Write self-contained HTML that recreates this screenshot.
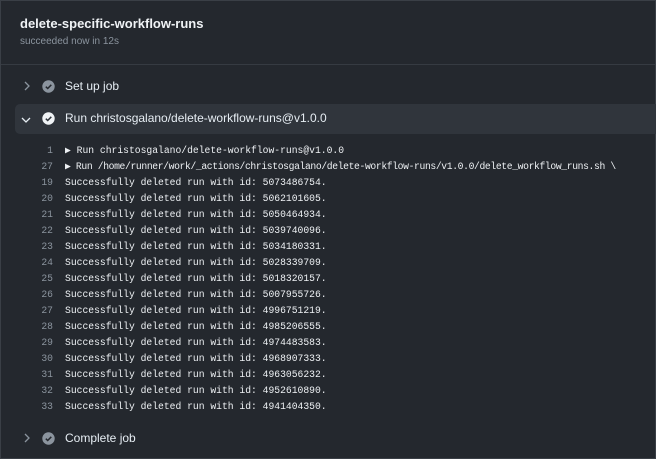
<!DOCTYPE html>
<html><head><meta charset="utf-8"><style>
html,body{margin:0;padding:0}
body{width:656px;height:459px;background:#24282e;overflow:hidden;font-family:"Liberation Sans",sans-serif;position:relative;color:#e6edf3}
.frame{position:absolute;left:0;top:0;width:654px;height:457px;border:1px solid #3a3f46}
.t{position:absolute;left:20px;top:16px;font-size:13px;font-weight:bold;color:#f0f3f6}
.s{position:absolute;left:20px;top:36px;font-size:10px;color:#8b949e}
.hr{position:absolute;left:1px;right:1px;top:64px;height:1px;background:#363b42}
.step{position:absolute;left:15px;width:641px;height:30px;font-size:12px;color:#e6edf3}
.step.act{background:#30353c;border-radius:5px 0 0 5px}
.step .txt{position:absolute;left:50px;top:8px}
.step svg{position:absolute}
.log{position:absolute;left:0;top:143px;font-family:"Liberation Mono",monospace;font-size:9.7px;color:#eef1f4}
.l{height:16px;line-height:16px;white-space:pre;position:relative}
.n{display:inline-block;width:53px;text-align:right;color:#8b949e;margin-right:12px}
</style></head><body>
<div class="frame"></div>
<div class="t">delete-specific-workflow-runs</div>
<div class="s">succeeded now in 12s</div>
<div class="hr"></div>

<div class="step" style="top:71px">
<svg style="left:8px;top:10px" width="8" height="10" viewBox="0 0 8 10"><path d="M2 1l4 4-4 4" fill="none" stroke="#8b949e" stroke-width="1.3"/></svg>
<svg style="left:27px;top:9px" width="13" height="13" viewBox="0 0 13 13"><circle cx="6.5" cy="6.5" r="6.2" fill="#8b949e"/><path d="M3.8 6.7l1.9 1.8 3.6-3.7" fill="none" stroke="#24282e" stroke-width="1.5"/></svg>
<span class="txt">Set up job</span></div>

<div class="step act" style="top:104px">
<svg style="left:6px;top:12px" width="10" height="8" viewBox="0 0 10 8"><path d="M1 2l4 4 4-4" fill="none" stroke="#e6edf3" stroke-width="1.3"/></svg>
<svg style="left:27px;top:8px" width="13" height="13" viewBox="0 0 13 13"><circle cx="6.5" cy="6.5" r="6.2" fill="#f0f3f6"/><path d="M3.8 6.7l1.9 1.8 3.6-3.7" fill="none" stroke="#30353c" stroke-width="1.5"/></svg>
<span class="txt" style="top:7px">Run christosgalano/delete-workflow-runs@v1.0.0</span></div>

<div class="log">
<div class="l"><span class="n">1</span>▶ Run christosgalano/delete-workflow-runs@v1.0.0</div>
<div class="l" style="letter-spacing:-0.36px"><span class="n" style="letter-spacing:0">27</span>▶ Run /home/runner/work/_actions/christosgalano/delete-workflow-runs/v1.0.0/delete_workflow_runs.sh \</div>
<div class="l"><span class="n">19</span>Successfully deleted run with id: 5073486754.</div>
<div class="l"><span class="n">20</span>Successfully deleted run with id: 5062101605.</div>
<div class="l"><span class="n">21</span>Successfully deleted run with id: 5050464934.</div>
<div class="l"><span class="n">22</span>Successfully deleted run with id: 5039740096.</div>
<div class="l"><span class="n">23</span>Successfully deleted run with id: 5034180331.</div>
<div class="l"><span class="n">24</span>Successfully deleted run with id: 5028339709.</div>
<div class="l"><span class="n">25</span>Successfully deleted run with id: 5018320157.</div>
<div class="l"><span class="n">26</span>Successfully deleted run with id: 5007955726.</div>
<div class="l"><span class="n">27</span>Successfully deleted run with id: 4996751219.</div>
<div class="l"><span class="n">28</span>Successfully deleted run with id: 4985206555.</div>
<div class="l"><span class="n">29</span>Successfully deleted run with id: 4974483583.</div>
<div class="l"><span class="n">30</span>Successfully deleted run with id: 4968907333.</div>
<div class="l"><span class="n">31</span>Successfully deleted run with id: 4963056232.</div>
<div class="l"><span class="n">32</span>Successfully deleted run with id: 4952610890.</div>
<div class="l"><span class="n">33</span>Successfully deleted run with id: 4941404350.</div>
</div>

<div class="step" style="top:423px">
<svg style="left:8px;top:10px" width="8" height="10" viewBox="0 0 8 10"><path d="M2 1l4 4-4 4" fill="none" stroke="#8b949e" stroke-width="1.3"/></svg>
<svg style="left:27px;top:9px" width="13" height="13" viewBox="0 0 13 13"><circle cx="6.5" cy="6.5" r="6.2" fill="#8b949e"/><path d="M3.8 6.7l1.9 1.8 3.6-3.7" fill="none" stroke="#24282e" stroke-width="1.5"/></svg>
<span class="txt">Complete job</span></div>
</body></html>
